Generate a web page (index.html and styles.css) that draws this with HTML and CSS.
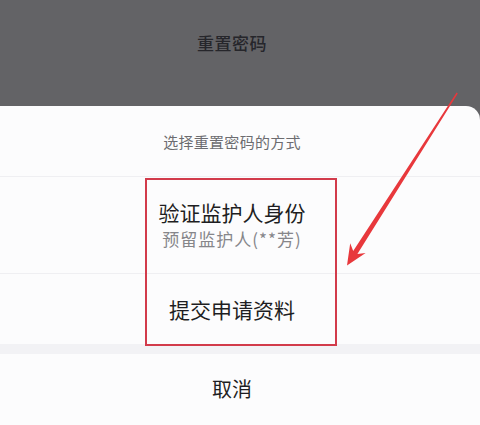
FILE: index.html
```html
<!DOCTYPE html>
<html lang="zh-CN">
<head>
<meta charset="utf-8">
<title>重置密码</title>
<link rel="stylesheet" href="styles.css">
</head>
<body>
<div class="page">
  <div class="overlay">
    <div class="page-title">重置密码</div>
  </div>
  <div class="sheet">
    <div class="sheet-header">选择重置密码的方式</div>
    <div class="option option-tall">
      <div class="option-title">验证监护人身份</div>
      <div class="option-sub">预留监护人(**芳)</div>
    </div>
    <div class="option">
      <div class="option-title">提交申请资料</div>
    </div>
    <div class="band"></div>
    <div class="option cancel">
      <div class="option-title">取消</div>
    </div>
  </div>
  <div class="highlight"></div>
  <svg class="arrow" width="480" height="425" viewBox="0 0 480 425">
    <polygon points="457.8,93.6 357.4,253.9 365.6,253 347,265.5 350.2,243.2 353.2,250.9 456.6,92.6" fill="#e8383c"/>
  </svg>
</div>
</body>
</html>
```
FILE: styles.css
```css
html, body {
  margin: 0;
  padding: 0;
}
body {
  width: 480px;
  height: 425px;
  overflow: hidden;
  background: #636366;
  font-family: "Noto Sans CJK SC", "Noto Sans", sans-serif;
}
.page {
  position: relative;
  width: 480px;
  height: 425px;
  overflow: hidden;
}
.overlay {
  height: 106px;
  background: #636366;
  display: flex;
  justify-content: center;
  padding-right: 16px;
  box-sizing: border-box;
}
.page-title {
  margin-top: 30px;
  font-size: 17px;
  line-height: 26px;
  color: #26262b;
  font-weight: 500;
  letter-spacing: 0.5px;
}
.sheet {
  background: #fcfcfd;
  border-top-right-radius: 14px;
  margin-left: -16px;
  height: 319px;
  display: flex;
  flex-direction: column;
}
.sheet-header {
  height: 70px;
  border-bottom: 1px solid #efeff2;
  display: flex;
  align-items: center;
  justify-content: center;
  font-size: 15px;
  color: #6c6c70;
  letter-spacing: 0.3px;
}
.option {
  height: 70px;
  display: flex;
  flex-direction: column;
  align-items: center;
  justify-content: center;
}
.option-tall {
  height: 96px;
  border-bottom: 1px solid #efeff2;
}
.option-title {
  font-size: 21px;
  line-height: 28px;
  color: #1e1e22;
}
.option-sub {
  font-size: 17px;
  line-height: 26px;
  color: #86868a;
  letter-spacing: 1px;
}
.band {
  height: 10px;
  background: #f2f2f5;
}
.cancel {
  height: 70px;
}
.cancel .option-title {
  font-size: 20px;
}
.highlight {
  position: absolute;
  left: 145px;
  top: 178px;
  width: 188px;
  height: 164px;
  border: 2px solid #d23b4b;
}
.arrow {
  position: absolute;
  left: 0;
  top: 0;
}
```
